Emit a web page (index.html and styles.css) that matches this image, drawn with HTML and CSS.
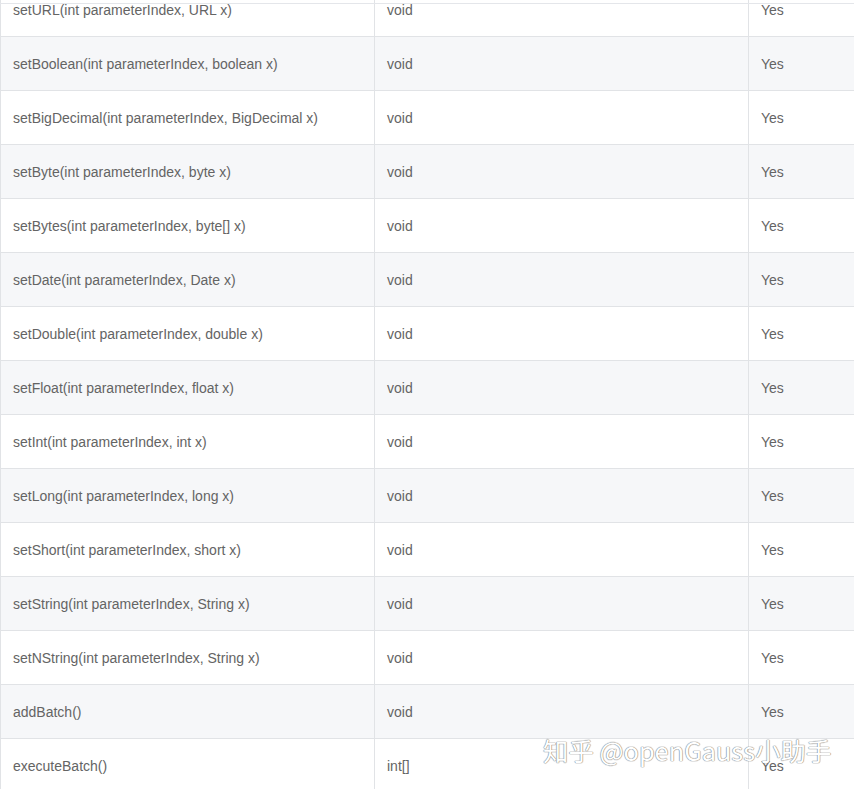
FILE: index.html
```html
<!DOCTYPE html>
<html lang="zh">
<head>
<meta charset="utf-8">
<title>PreparedStatement</title>
<link rel="stylesheet" href="styles.css">
</head>
<body>
<div class="page">
  <div class="topline"></div>
  <table class="api">
    <colgroup><col class="c1"><col class="c2"><col class="c3"></colgroup>
    <tbody>
      <tr><td>setURL(int parameterIndex, URL x)</td><td>void</td><td>Yes</td></tr>
      <tr><td>setBoolean(int parameterIndex, boolean x)</td><td>void</td><td>Yes</td></tr>
      <tr><td>setBigDecimal(int parameterIndex, BigDecimal x)</td><td>void</td><td>Yes</td></tr>
      <tr><td>setByte(int parameterIndex, byte x)</td><td>void</td><td>Yes</td></tr>
      <tr><td>setBytes(int parameterIndex, byte[] x)</td><td>void</td><td>Yes</td></tr>
      <tr><td>setDate(int parameterIndex, Date x)</td><td>void</td><td>Yes</td></tr>
      <tr><td>setDouble(int parameterIndex, double x)</td><td>void</td><td>Yes</td></tr>
      <tr><td>setFloat(int parameterIndex, float x)</td><td>void</td><td>Yes</td></tr>
      <tr><td>setInt(int parameterIndex, int x)</td><td>void</td><td>Yes</td></tr>
      <tr><td>setLong(int parameterIndex, long x)</td><td>void</td><td>Yes</td></tr>
      <tr><td>setShort(int parameterIndex, short x)</td><td>void</td><td>Yes</td></tr>
      <tr><td>setString(int parameterIndex, String x)</td><td>void</td><td>Yes</td></tr>
      <tr><td>setNString(int parameterIndex, String x)</td><td>void</td><td>Yes</td></tr>
      <tr><td>addBatch()</td><td>void</td><td>Yes</td></tr>
      <tr><td>executeBatch()</td><td>int[]</td><td>Yes</td></tr>
    </tbody>
  </table>
  <div class="watermark">知乎 @openGauss小助手</div>
</div>
</body>
</html>
```
FILE: styles.css
```css
html, body {
  margin: 0;
  padding: 0;
  background: #ffffff;
}
.page {
  position: relative;
  width: 854px;
  height: 789px;
  overflow: hidden;
}
.topline {
  position: absolute;
  left: 0;
  top: 3px;
  width: 854px;
  height: 1px;
  background: #e4e6ea;
  z-index: 2;
}
.api {
  border-collapse: collapse;
  table-layout: fixed;
  width: 1122px;
  margin-top: -18px;
  font-family: "Liberation Sans", Arial, sans-serif;
  font-size: 14px;
  color: #646464;
}
.c1, .c2, .c3 { width: 374px; }
.api td {
  height: 54px;
  padding: 0 12px;
  border: 1px solid #e1e3e6;
  vertical-align: middle;
  white-space: nowrap;
  box-sizing: border-box;
}
.api tr:nth-child(even) td {
  background: #f6f7f9;
}
.watermark {
  position: absolute;
  left: 543px;
  top: 732px;
  font-family: "Noto Sans CJK SC", "Noto Sans", sans-serif;
  font-size: 25.4px;
  line-height: 36px;
  color: #ffffff;
  white-space: nowrap;
  text-shadow: 0 0 1px #8a8a8a, 0 0 1px #8a8a8a, 0 0 1px #8a8a8a;
  z-index: 3;
}
```
